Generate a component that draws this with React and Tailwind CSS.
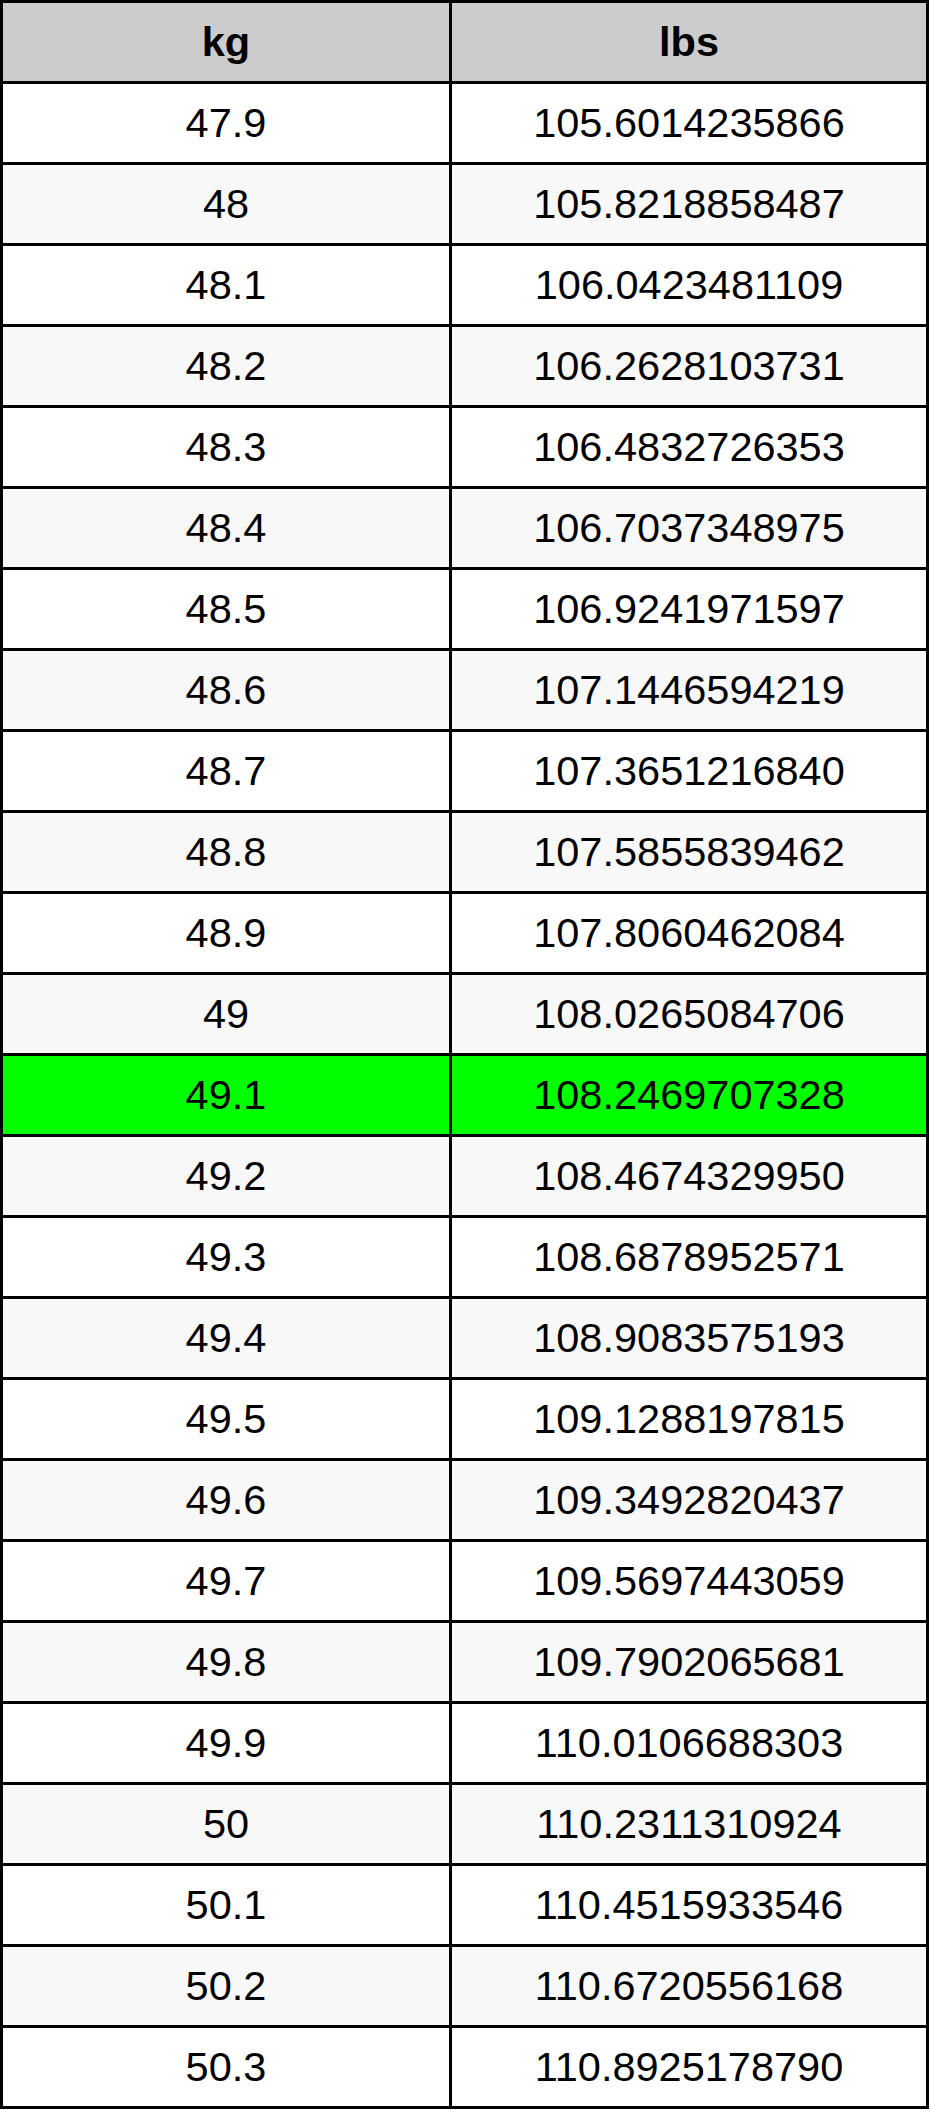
import React from 'react';

const rows = [
  ['47.9', '105.6014235866'],
  ['48', '105.8218858487'],
  ['48.1', '106.0423481109'],
  ['48.2', '106.2628103731'],
  ['48.3', '106.4832726353'],
  ['48.4', '106.7037348975'],
  ['48.5', '106.9241971597'],
  ['48.6', '107.1446594219'],
  ['48.7', '107.3651216840'],
  ['48.8', '107.5855839462'],
  ['48.9', '107.8060462084'],
  ['49', '108.0265084706'],
  ['49.1', '108.2469707328'],
  ['49.2', '108.4674329950'],
  ['49.3', '108.6878952571'],
  ['49.4', '108.9083575193'],
  ['49.5', '109.1288197815'],
  ['49.6', '109.3492820437'],
  ['49.7', '109.5697443059'],
  ['49.8', '109.7902065681'],
  ['49.9', '110.0106688303'],
  ['50', '110.2311310924'],
  ['50.1', '110.4515933546'],
  ['50.2', '110.6720556168'],
  ['50.3', '110.8925178790'],
];

const App = () => {
  return (
    <div className="bg-white min-h-[2115px]" style={{ fontFamily: '"Liberation Sans", Arial, sans-serif' }}>
      <div className="w-[929px] border-t-[3px] border-l-[3px] border-black text-[41.5px] text-black">
        <div className="flex h-[81px] bg-[#cccccc] font-bold">
          <div className="w-[449px] flex items-center justify-center border-r-[3px] border-b-[3px] border-black">kg</div>
          <div className="flex-1 flex items-center justify-center border-r-[3px] border-b-[3px] border-black">lbs</div>
        </div>
        {rows.map(([kg, lbs], i) => {
          let bg = i % 2 === 0 ? 'bg-white' : 'bg-[#f8f8f8]';
          if (kg === '49.1') bg = 'bg-[#00ff00]';
          return (
            <div key={kg} className={`flex h-[81px] ${bg}`}>
              <div className="w-[449px] flex items-center justify-center border-r-[3px] border-b-[3px] border-black">{kg}</div>
              <div className="flex-1 flex items-center justify-center border-r-[3px] border-b-[3px] border-black">{lbs}</div>
            </div>
          );
        })}
      </div>
    </div>
  );
};

export default App;
